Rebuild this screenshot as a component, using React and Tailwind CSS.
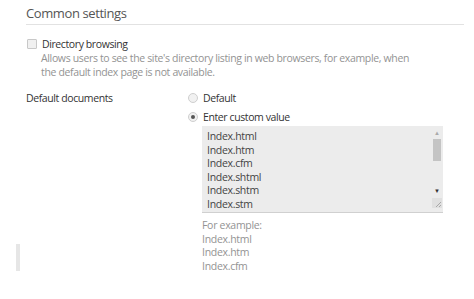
import React from "react";

const files = ["Index.html", "Index.htm", "Index.cfm", "Index.shtml", "Index.shtm", "Index.stm"];

function Radio({ checked }) {
  return (
    <span className="w-[10px] h-[10px] rounded-full border border-[#cfcfcf] bg-[#f1f1f1] flex items-center justify-center">
      {checked && <span className="w-[4px] h-[4px] rounded-full bg-[#555]" />}
    </span>
  );
}

export default function App() {
  return (
    <div className="w-[474px] h-[299px] bg-white relative text-[#333]" style={{ fontFamily: '"Open Sans", sans-serif' }}>
      <div className="pl-[26px] pr-[10px] pt-[3px]">
        <div className="text-[13px] tracking-[-0.4px] text-[#555] leading-[20px] pb-[1px] border-b border-[#e2e2e2]">Common settings</div>

        <div className="mt-[12px] flex items-center gap-[5px] pl-[1px]">
          <span className="w-[10px] h-[10px] border border-[#c8c8c8] bg-[#f0f0f0] rounded-[1px]" />
          <span className="text-[10.5px] tracking-[-0.4px] leading-[14px]">Directory browsing</span>
        </div>
        <div className="pl-[15px] mt-[1px] text-[10.5px] tracking-[-0.35px] leading-[13.5px] text-[#939393]">
          <div>Allows users to see the site's directory listing in web browsers, for example, when</div>
          <div>the default index page is not available.</div>
        </div>

        <div className="mt-[12px] flex">
          <div className="w-[162px] text-[10.5px] tracking-[-0.4px] leading-[14px]">Default documents</div>
          <div className="flex flex-col">
            <div className="flex items-center gap-[5px]">
              <Radio />
              <span className="text-[10.5px] tracking-[-0.4px] leading-[14px]">Default</span>
            </div>
            <div className="flex items-center gap-[5px] mt-[5px]">
              <Radio checked />
              <span className="text-[10.5px] tracking-[-0.4px] leading-[14px]">Enter custom value</span>
            </div>
            <div className="ml-[14px] mt-[2px] w-[241px] h-[87px] bg-[#ececec] border-b border-[#d0d0d0] flex">
              <div className="flex-1 pl-[5px] pt-[4px] text-[10.5px] tracking-[-0.3px] leading-[13.6px] text-[#444]">
                {files.map((f) => (
                  <div key={f}>{f}</div>
                ))}
              </div>
              <div className="w-[12px] flex flex-col items-center">
                <span className="mt-[4px] text-[6px] leading-[6px] text-[#aaa]">▲</span>
                <span className="mt-[3px] w-[8px] h-[22px] bg-[#c4c4c4]" />
                <span className="mt-[27px] text-[6px] leading-[6px] text-[#333]">▼</span>
                <svg className="mt-[4px]" width="10" height="10" viewBox="0 0 10 10">
                  <rect width="10" height="10" fill="#e0e0e0" />
                  <path d="M9 4 L4 9 M9 7 L7 9" stroke="#999" strokeWidth="0.8" />
                </svg>
              </div>
            </div>
            <div className="ml-[14px] mt-[6px] text-[10.5px] tracking-[-0.3px] leading-[13.6px] text-[#939393]">
              <div>For example:</div>
              <div>Index.html</div>
              <div>Index.htm</div>
              <div>Index.cfm</div>
            </div>
          </div>
        </div>
      </div>
      <div className="absolute left-[16px] top-[244px] w-[4px] h-[27px] bg-[#e6e6e6]" />
    </div>
  );
}
